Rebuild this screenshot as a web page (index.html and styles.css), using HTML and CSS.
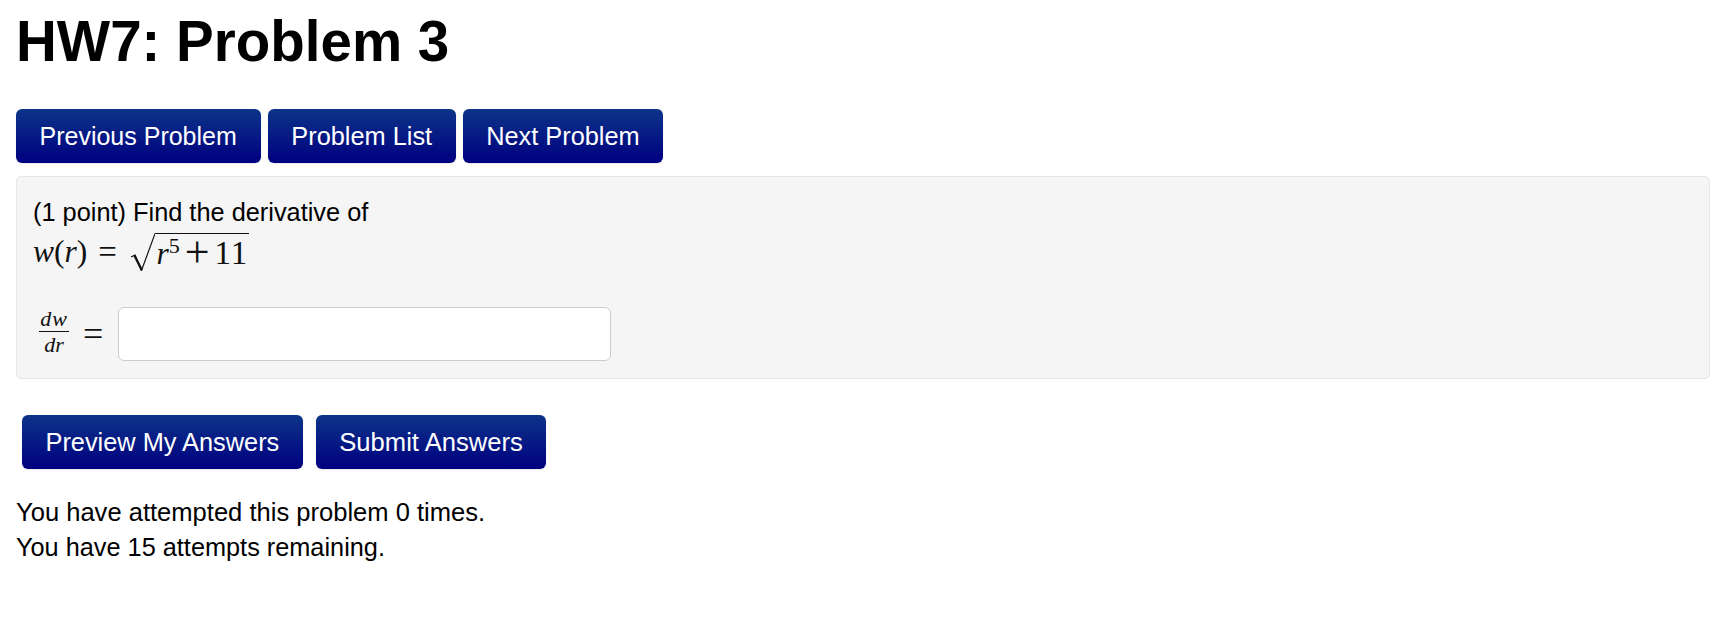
FILE: index.html
```html
<!DOCTYPE html>
<html lang="en">
<head>
    <meta charset="UTF-8">
    <link rel="stylesheet" href="styles.css">
    <title>HW7: Problem 3</title>
</head>
<body>

    <h1 class="page-title">HW7: Problem 3</h1>

    <!-- Problem navigation -->
    <div class="nav-buttons">
        <a class="btn btn-prev" href="#">Previous Problem</a>
        <a class="btn" href="#">Problem List</a>
        <a class="btn" href="#">Next Problem</a>
    </div>

    <!-- Problem text and answer box -->
    <div class="problem-well">
        <div class="problem-text">(1 point) Find the derivative of</div>
        <div class="math math-line">
            <i>w</i><span>(</span><i>r</i><span>)</span>
            <span class="math-eq">=</span>
            <svg class="radical" viewBox="0 0 26 38" width="26" height="38">
                <path d="M2 24 L6 22 L12.5 37.5 L26 0.6" fill="none" stroke="#111" stroke-width="1.2"/>
                <path d="M5.5 22.5 L12.7 37" fill="none" stroke="#111" stroke-width="2.3"/>
            </svg>
            <span class="radicand"><i>r</i><sup>5</sup><span class="math-plus">+</span><span class="math-num">11</span></span>
        </div>
        <div class="answer-row">
            <div class="math fraction">
                <span class="frac-top"><i>dw</i></span>
                <span class="frac-bottom"><i>dr</i></span>
            </div>
            <span class="math answer-eq">=</span>
            <input class="answer-input" type="text">
        </div>
    </div>

    <!-- Answer actions -->
    <div class="answer-buttons">
        <a class="btn" href="#">Preview My Answers</a>
        <a class="btn btn-submit" href="#">Submit Answers</a>
    </div>

    <div class="attempts">
        <div>You have attempted this problem 0 times.</div>
        <div class="attempts-left">You have 15 attempts remaining.</div>
    </div>

</body>
</html>
```

FILE: styles.css
```css
body {
    margin: 0;
    padding: 0 10px 0 16px;
    background-color: #ffffff;
    color: #000000;
    font-family: "Liberation Sans", Arial, sans-serif;
    font-size: 25.35px;
}

.page-title {
    margin: 0;
    padding-top: 9px;
    height: 98px;
    box-sizing: border-box;
    font-size: 56.5px;
    line-height: 66px;
    font-weight: bold;
}

/* Buttons */
.btn {
    display: flex;
    align-items: center;
    height: 54px;
    box-sizing: border-box;
    padding: 0 23.5px;
    border-radius: 6px;
    background-image: linear-gradient(to bottom, #0c3488, #000080);
    box-shadow: 0 1px 2px rgba(0, 0, 0, 0.1);
    color: #ffffff;
    font-size: 25.35px;
    text-decoration: none;
}

.btn-prev {
    padding: 0 24px 0 23.5px;
    font-size: 25px;
}

.btn-submit {
    font-size: 25.6px;
}

.nav-buttons {
    display: flex;
    gap: 7px;
    margin-top: 11px;
}

.answer-buttons {
    display: flex;
    gap: 13px;
    margin: 36px 0 0 6px;
}

/* Problem area */
.problem-well {
    margin-top: 13px;
    height: 203px;
    box-sizing: border-box;
    padding: 17px 16px 0;
    background-color: #f5f5f5;
    border: 1px solid #e6e6e6;
    border-radius: 5px;
}

.problem-text {
    line-height: 36px;
}

.math {
    font-family: "Liberation Serif", "Times New Roman", serif;
    color: #111111;
}

.math-line {
    display: flex;
    align-items: flex-end;
    height: 40px;
    font-size: 31.5px;
    line-height: 36px;
}

.math-eq {
    margin: 0 12px 0 11px;
    font-size: 33px;
}

.radical {
    display: block;
    margin-bottom: -1px;
}

.radicand {
    border-top: 1px solid #111111;
    padding: 3px 1px 0 1.5px;
    line-height: 33px;
    height: 33px;
}

.radicand sup {
    font-size: 22px;
    line-height: 0;
}

.math-plus {
    margin: 0 5px;
    font-size: 44px;
    line-height: 0;
    vertical-align: -3px;
}

.math-num {
    font-size: 33px;
    letter-spacing: 1px;
}

.answer-row {
    display: flex;
    align-items: center;
    margin-top: 36px;
}

.fraction {
    display: flex;
    flex-direction: column;
    align-items: center;
    width: 30px;
    margin: 0 0 4px 6px;
    font-size: 22px;
    line-height: 25px;
}

.frac-top {
    align-self: stretch;
    text-align: center;
    border-bottom: 1.5px solid #111111;
    letter-spacing: 1px;
}

.answer-eq {
    margin: 0 15px 0 14px;
    font-size: 36px;
}

.answer-input {
    width: 493px;
    height: 54px;
    box-sizing: border-box;
    background-color: #ffffff;
    border: 1px solid #cccccc;
    border-radius: 6px;
}

.attempts {
    margin-top: 25.5px;
    font-size: 25.55px;
    line-height: 35.5px;
}

.attempts-left {
    font-size: 25.3px;
}
```
